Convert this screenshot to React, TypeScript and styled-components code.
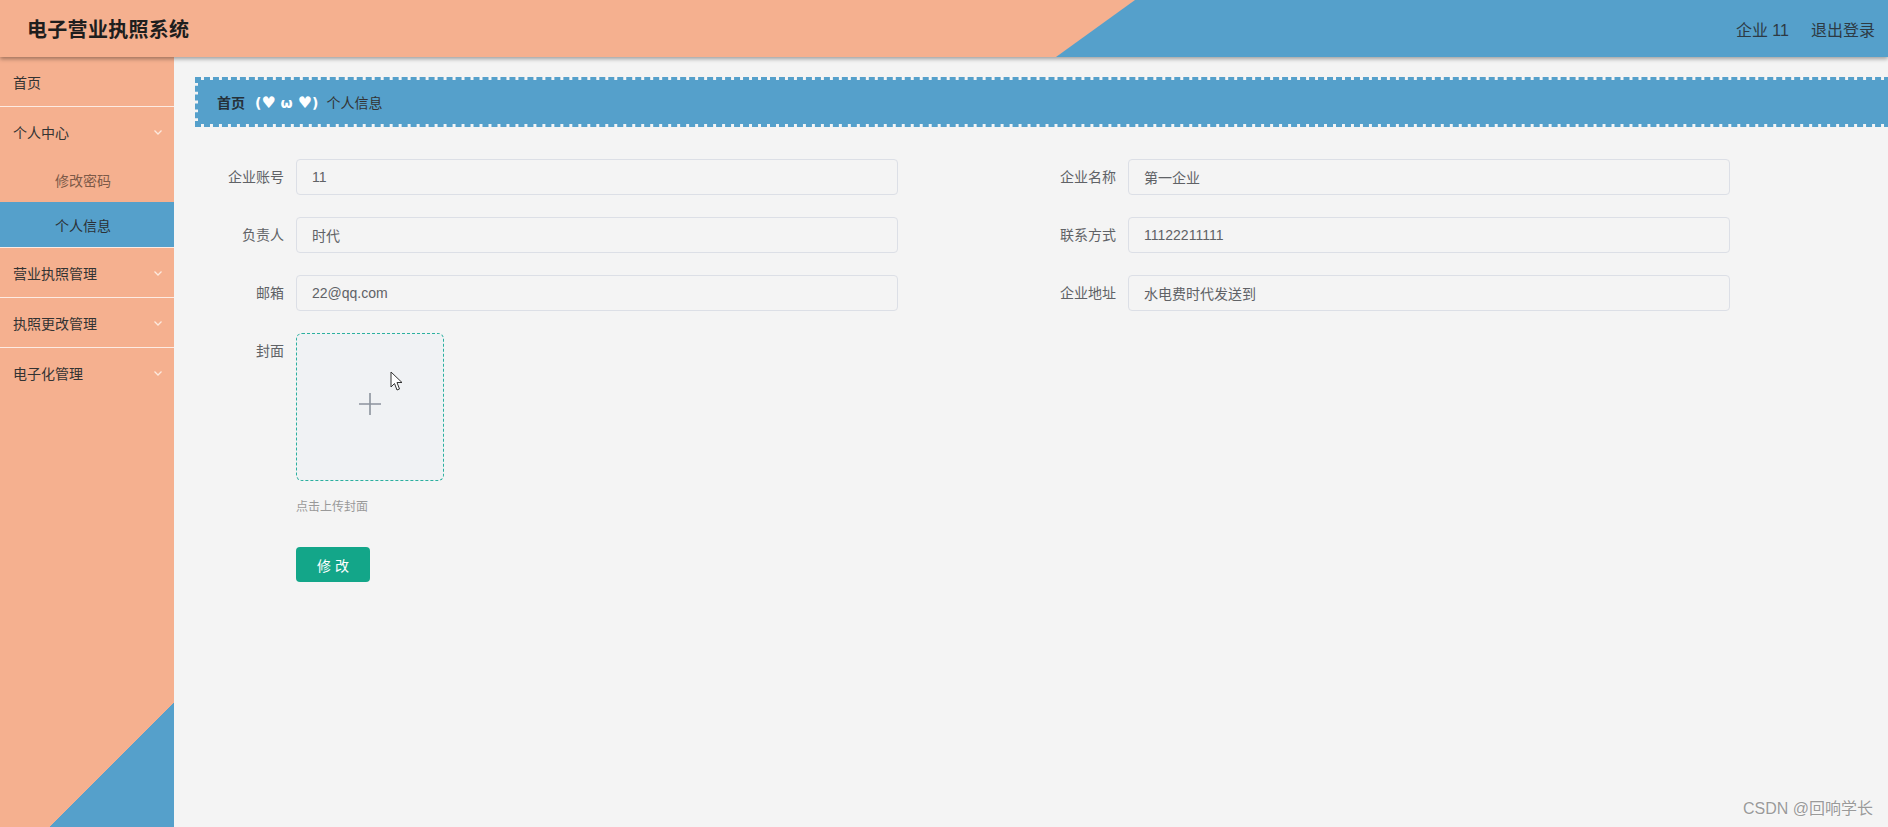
import React from "react";
import styled, { createGlobalStyle } from "styled-components";

const SALMON = "#f5b08f";
const BLUE = "#55a0cb";

const Global = createGlobalStyle`
  html, body { margin: 0; padding: 0; }
  body {
    font-family: "Liberation Sans", "Noto Sans CJK SC", sans-serif;
    background: #f4f4f4;
    overflow: hidden;
  }
  * { box-sizing: border-box; }
`;

const Page = styled.div`
  display: flex;
  flex-direction: column;
  height: 100vh;
  position: relative;
`;

const Header = styled.header`
  position: relative;
  height: 57px;
  flex: 0 0 57px;
  display: flex;
  align-items: center;
  justify-content: space-between;
  background: ${SALMON};
  box-shadow: 0 2px 4px rgba(0, 0, 0, 0.35);
  z-index: 2;
  &::before {
    content: "";
    position: absolute;
    inset: 0;
    background: ${BLUE};
    clip-path: polygon(1135px 0, 100% 0, 100% 100%, 1056px 100%);
  }
`;

const Title = styled.h1`
  position: relative;
  margin: 0 0 0 27px;
  font-size: 20px;
  font-weight: 700;
  color: #1e1e1e;
  letter-spacing: 0.3px;
`;

const HeaderRight = styled.div`
  position: relative;
  display: flex;
  gap: 22px;
  margin-right: 13px;
  font-size: 16px;
  color: #2d3a44;
`;

const Body = styled.div`
  flex: 1;
  display: flex;
  min-height: 0;
`;

const Sidebar = styled.nav`
  width: 174px;
  flex: 0 0 174px;
  background: linear-gradient(
    135deg,
    ${SALMON} calc(100% - 88px),
    ${BLUE} calc(100% - 88px)
  );
`;

const MenuItem = styled.div<{ $last?: boolean }>`
  height: 50px;
  display: flex;
  align-items: center;
  justify-content: space-between;
  padding: 0 10px 0 13px;
  font-size: 14px;
  color: #333;
  border-bottom: ${(p) => (p.$last ? "none" : "1px solid rgba(255,255,255,0.75)")};
`;

const Group = styled.div`
  border-bottom: 1px solid rgba(255, 255, 255, 0.75);
`;

const GroupTitle = styled.div`
  height: 50px;
  display: flex;
  align-items: center;
  justify-content: space-between;
  padding: 0 10px 0 13px;
  font-size: 14px;
  color: #333;
`;

const SubItem = styled.div<{ $active?: boolean }>`
  height: 45px;
  display: flex;
  align-items: center;
  padding-left: 55px;
  font-size: 14px;
  color: ${(p) => (p.$active ? "#2b3036" : "#7d5a48")};
  background: ${(p) => (p.$active ? BLUE : "transparent")};
`;

const Main = styled.main`
  flex: 1;
  min-width: 0;
  overflow: hidden;
  background: #f4f4f4;
  padding: 20px 0 0 21px;
`;

const Crumb = styled.div`
  height: 50px;
  width: calc(100% + 20px);
  display: flex;
  align-items: center;
  padding-left: 19px;
  background: ${BLUE};
  background-clip: padding-box;
  border: 3px dashed ${BLUE};
  border-right: none;
  font-size: 14px;
  color: #333;
`;

const CrumbHome = styled.span`
  font-weight: 700;
  color: #25313a;
`;

const CrumbSep = styled.span`
  margin: 0 8px 0 10px;
  color: #fff;
  font-weight: 700;
  font-family: "DejaVu Sans", "Noto Sans CJK SC", sans-serif;
  font-size: 14px;
`;

const Heart = styled.span`
  font-size: 16px;
`;

const Form = styled.div`
  margin: 32px 0 0 21px;
  display: grid;
  grid-template-columns: 832px 832px;
  row-gap: 22px;
`;

const Row = styled.div`
  display: flex;
  align-items: center;
`;

const TopRow = styled.div`
  display: flex;
  align-items: flex-start;
  grid-column: 1 / span 2;
`;

const Label = styled.label`
  width: 80px;
  padding-right: 12px;
  text-align: right;
  font-size: 14px;
  line-height: 36px;
  color: #606266;
  flex: 0 0 80px;
`;

const Input = styled.div`
  width: 602px;
  height: 36px;
  display: flex;
  align-items: center;
  padding: 0 15px;
  border: 1px solid #dcdfe6;
  border-radius: 4px;
  background: #f4f4f4;
  font-size: 14px;
  color: #606266;
`;

const UploadCol = styled.div`
  display: flex;
  flex-direction: column;
  align-items: flex-start;
`;

const UploadBox = styled.div`
  position: relative;
  width: 148px;
  height: 148px;
  padding-bottom: 6px;
  border: 1px dashed #2bb09f;
  border-radius: 6px;
  background: #f0f2f4;
  display: flex;
  align-items: center;
  justify-content: center;
`;

const Cursor = styled.svg`
  position: absolute;
  left: 93px;
  top: 37px;
`;

const Tip = styled.div`
  margin-top: 18px;
  font-size: 12px;
  line-height: 16px;
  color: #999;
`;

const Button = styled.button`
  margin-top: 32px;
  width: 74px;
  height: 35px;
  border: none;
  border-radius: 4px;
  background: #13a689;
  color: #fff;
  font-size: 14px;
  font-family: inherit;
  letter-spacing: 4px;
  text-indent: 4px;
`;

const Watermark = styled.div`
  position: absolute;
  right: 15px;
  bottom: 8px;
  font-size: 16px;
  color: #9a9a9a;
  text-shadow: 0 0 2px #fff;
`;

const Chevron = () => (
  <svg width="12" height="12" viewBox="0 0 12 12">
    <path d="M2.5 4.5 L6 8 L9.5 4.5" fill="none" stroke="#fde9de" strokeWidth="1.3" />
  </svg>
);

const fields: [string, string][] = [
  ["企业账号", "11"],
  ["企业名称", "第一企业"],
  ["负责人", "时代"],
  ["联系方式", "11122211111"],
  ["邮箱", "22@qq.com"],
  ["企业地址", "水电费时代发送到"],
];

export default function App() {
  return (
    <Page>
      <Global />
      <Header>
        <Title>电子营业执照系统</Title>
        <HeaderRight>
          <span>企业 11</span>
          <span>退出登录</span>
        </HeaderRight>
      </Header>
      <Body>
        <Sidebar>
          <MenuItem>首页</MenuItem>
          <Group>
            <GroupTitle>
              个人中心
              <Chevron />
            </GroupTitle>
            <SubItem>修改密码</SubItem>
            <SubItem $active>个人信息</SubItem>
          </Group>
          <MenuItem>
            营业执照管理
            <Chevron />
          </MenuItem>
          <MenuItem>
            执照更改管理
            <Chevron />
          </MenuItem>
          <MenuItem $last>
            电子化管理
            <Chevron />
          </MenuItem>
        </Sidebar>
        <Main>
          <Crumb>
            <CrumbHome>首页</CrumbHome>
            <CrumbSep>
              (<Heart>♥</Heart> ω <Heart>♥</Heart>)
            </CrumbSep>
            <span>个人信息</span>
          </Crumb>
          <Form>
            {fields.map(([l, v]) => (
              <Row key={l}>
                <Label>{l}</Label>
                <Input>{v}</Input>
              </Row>
            ))}
            <TopRow>
              <Label>封面</Label>
              <UploadCol>
                <UploadBox>
                  <svg width="26" height="26" viewBox="0 0 26 26">
                    <path d="M13 2 V24 M2 13 H24" stroke="#8c939d" strokeWidth="1.6" fill="none" />
                  </svg>
                  <Cursor width="14" height="21" viewBox="0 0 14 21">
                    <path
                      d="M1 1 L1 16 L4.5 12.5 L7 19 L9.5 18 L7 11.5 L12 11.5 Z"
                      fill="#fff"
                      stroke="#333"
                      strokeWidth="1"
                      strokeLinejoin="round"
                    />
                  </Cursor>
                </UploadBox>
                <Tip>点击上传封面</Tip>
                <Button>修改</Button>
              </UploadCol>
            </TopRow>
          </Form>
        </Main>
      </Body>
      <Watermark>CSDN @回响学长</Watermark>
    </Page>
  );
}
